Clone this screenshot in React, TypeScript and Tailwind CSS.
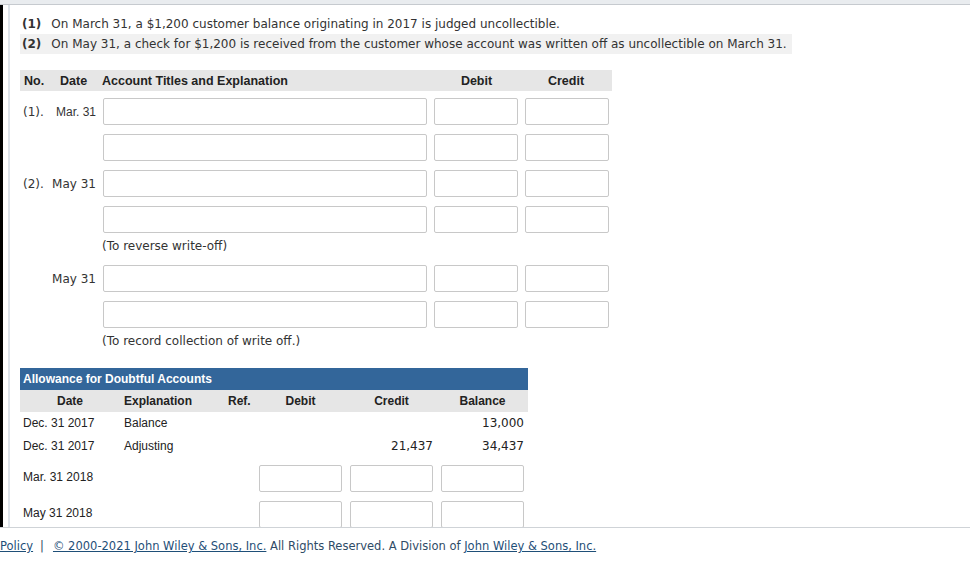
import React from "react";

const verdana = { fontFamily: "'DejaVu Sans', Verdana, sans-serif" };
const tahoma = { fontFamily: "'Liberation Sans', Tahoma, Arial, sans-serif" };

function Box({ w }: { w: string }) {
  return <div className={`${w} h-[27px] shrink-0 rounded-[2px] border border-[#c8c8c8] bg-white`} />;
}

function JournalRow({ no, date, small }: { no?: string; date?: string; small?: boolean }) {
  return (
    <div className="flex items-center">
      <div className="flex w-[83px] shrink-0 items-center justify-between pl-[3px] pr-[7px] text-[12px] text-[#333]">
        <span style={verdana}>{no ?? ""}</span>
        {date && <span style={small ? tahoma : verdana}>{date}</span>}
      </div>
      <div className="flex gap-[7px]">
        <Box w="w-[324px]" />
        <Box w="w-[84px]" />
        <Box w="w-[84px]" />
      </div>
    </div>
  );
}

function Note({ text }: { text: string }) {
  return (
    <div className="flex h-[20px] items-center pl-[82px] text-[12px] text-[#333]" style={verdana}>
      {text}
    </div>
  );
}

const ledgerCols = "grid grid-cols-[100px_104px_35px_91px_91px_87px]";

export default function App() {
  return (
    <div className="flex h-[581px] w-[970px] flex-col overflow-hidden bg-white">
      <div className="h-[5px] shrink-0 border-b border-[#c6cacf] bg-[#e9ecef]" />
      <div className="flex h-[523px] shrink-0 overflow-hidden border-b border-[#cfd3d7]">
        <div className="w-[3px] shrink-0 bg-black" />
        <div className="w-[5px] shrink-0" />
        <div className="w-[2px] shrink-0 bg-[#dde3ea]" />
        <div className="flex-1 pl-[10px] pt-[9px]">
          {/* problem statement */}
          <div className="text-[12px] leading-[20px] text-[#333]" style={verdana}>
            <div className="pl-[2px]">
              <b className="mr-[10px]">(1)</b>On March 31, a $1,200 customer balance originating in 2017 is judged uncollectible.
            </div>
            <div className="w-[772px] bg-[#f1f1f1] pl-[2px]">
              <b className="mr-[10px]">(2)</b>On May 31, a check for $1,200 is received from the customer whose account was written off as uncollectible on March 31.
            </div>
          </div>

          {/* journal entries */}
          <div className="mt-[16px] w-[592px]">
            <div className="flex h-[21px] items-center bg-[#e6e6e6] pt-[1px] text-[12.5px] font-bold text-[#222]" style={tahoma}>
              <span className="w-[40px] pl-[4px]">No.</span>
              <span className="w-[42px]">Date</span>
              <span className="w-[329px]">Account Titles and Explanation</span>
              <span className="w-[91px] text-center">Debit</span>
              <span className="w-[88px] text-center">Credit</span>
            </div>
            <div className="mt-[7px] flex flex-col gap-[9px]">
              <JournalRow no="(1)." date="Mar. 31" small />
              <JournalRow />
              <JournalRow no="(2)." date="May 31" />
              <JournalRow />
            </div>
            <div className="mt-[3px]">
              <Note text="(To reverse write-off)" />
            </div>
            <div className="mt-[9px] flex flex-col gap-[9px]">
              <JournalRow date="May 31" />
              <JournalRow />
            </div>
            <div className="mt-[3px]">
              <Note text="(To record collection of write off.)" />
            </div>
          </div>

          {/* T-account */}
          <div className="mt-[17px] w-[508px] text-[12px] text-[#222]" style={tahoma}>
            <div className="flex h-[22px] items-center bg-[#33669a] pl-[3px] font-bold text-white">
              Allowance for Doubtful Accounts
            </div>
            <div className={`${ledgerCols} h-[22px] items-center bg-[#e6e6e6] font-bold`}>
              <span className="text-center">Date</span>
              <span className="pl-[4px]">Explanation</span>
              <span className="pl-[4px]">Ref.</span>
              <span className="w-[83px] text-center">Debit</span>
              <span className="w-[83px] text-center">Credit</span>
              <span className="w-[83px] text-center">Balance</span>
            </div>
            <div className={`${ledgerCols} h-[22px] items-center`}>
              <span className="pl-[3px]">Dec. 31 2017</span>
              <span className="pl-[4px]">Balance</span>
              <span />
              <span />
              <span />
              <span className="w-[83px] text-right" style={verdana}>13,000</span>
            </div>
            <div className={`${ledgerCols} h-[23px] items-center`}>
              <span className="pl-[3px]">Dec. 31 2017</span>
              <span className="pl-[4px]">Adjusting</span>
              <span />
              <span />
              <span className="w-[83px] text-right" style={verdana}>21,437</span>
              <span className="w-[83px] text-right" style={verdana}>34,437</span>
            </div>
            {["Mar. 31 2018", "May 31 2018"].map((d) => (
              <div key={d} className={`${ledgerCols} items-center pb-[1px] pt-[8px]`}>
                <span className="pb-[4px] pl-[3px]">{d}</span>
                <span />
                <span />
                <Box w="w-[83px]" />
                <Box w="w-[83px]" />
                <Box w="w-[83px]" />
              </div>
            ))}
          </div>
        </div>
      </div>
      <div className="pt-[10px] text-[11.5px] text-[#2f4b66]" style={verdana}>
        <a className="text-[#1f4f78] underline">Policy</a>
        <span className="ml-[7px] mr-[9px]">|</span>
        <a className="text-[#1f4f78] underline">© 2000-2021 John Wiley &amp; Sons, Inc.</a> All Rights Reserved. A Division of{" "}
        <a className="text-[#1f4f78] underline">John Wiley &amp; Sons, Inc.</a>
      </div>
    </div>
  );
}
